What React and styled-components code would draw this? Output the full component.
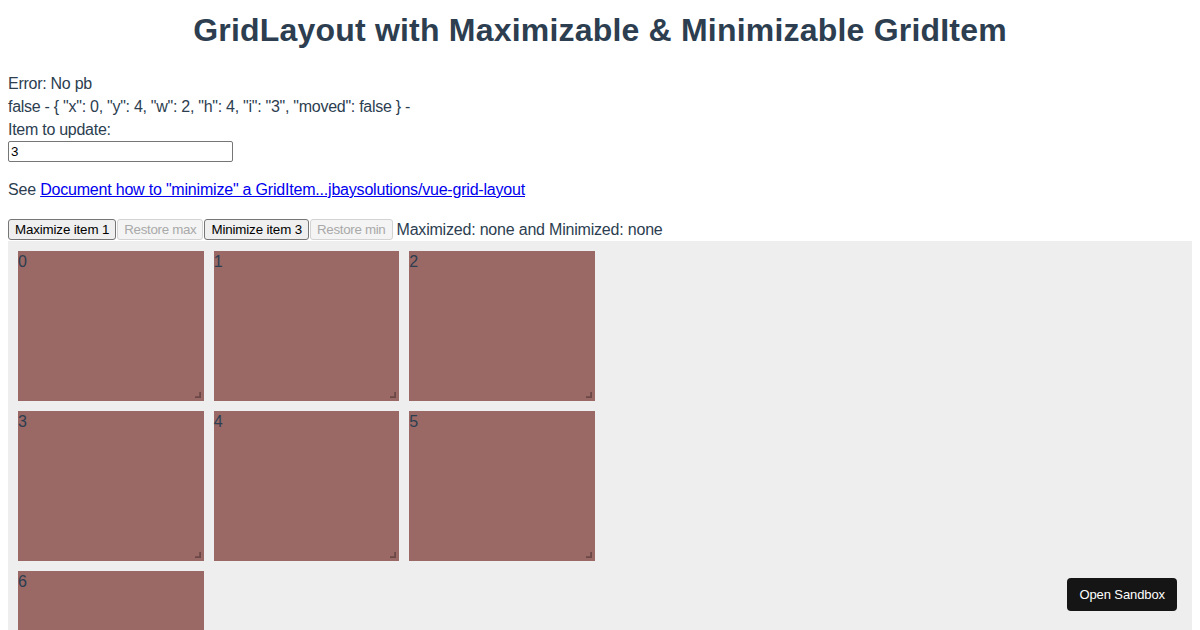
import React, { useState } from "react";
import styled, { createGlobalStyle } from "styled-components";

const GlobalStyle = createGlobalStyle`
  html, body {
    margin: 0;
    overflow: hidden;
  }
  body {
    font-family: "Liberation Sans", Arial, Helvetica, sans-serif;
    color: #2c3e50;
    background: #fff;
  }
`;

const layout = [
  { x: 0, y: 0, w: 2, h: 4, i: "0" },
  { x: 2, y: 0, w: 2, h: 4, i: "1" },
  { x: 4, y: 0, w: 2, h: 4, i: "2" },
  { x: 0, y: 4, w: 2, h: 4, i: "3" },
  { x: 2, y: 4, w: 2, h: 4, i: "4" },
  { x: 4, y: 4, w: 2, h: 4, i: "5" },
  { x: 0, y: 8, w: 2, h: 4, i: "6" },
];

const Page = styled.div`
  padding: 0 8px;
`;

const Title = styled.h1`
  margin: 12px 0 24px;
  font-size: 32px;
  line-height: 36px;
  letter-spacing: 0.2px;
  font-weight: bold;
  text-align: center;
`;

const Line = styled.div`
  font-size: 16px;
  line-height: 23px;
  letter-spacing: -0.27px;
`;

const ItemInput = styled.input`
  display: block;
  box-sizing: border-box;
  width: 225px;
  height: 21px;
  margin: 0;
  padding: 1px 2px;
  border: 1px solid #767676;
  border-radius: 2px;
  font-family: "Liberation Sans", Arial, sans-serif;
  font-size: 13.33px;
  color: #000;
`;

const SeeLine = styled.p`
  margin: 16px 0 0;
  font-size: 16px;
  line-height: 23px;
  letter-spacing: -0.2px;

  & > a {
    color: #0000ee;
    text-decoration: underline;
  }
`;

const Toolbar = styled.div`
  display: flex;
  align-items: flex-start;
  height: 22px;
  margin-top: 18px;
`;

const Button = styled.button`
  box-sizing: border-box;
  height: 21px;
  margin: 0;
  padding: 1px 6px;
  font-family: "Liberation Sans", Arial, sans-serif;
  font-size: 13.33px;
  line-height: 17px;
  letter-spacing: ${(p) => (p.disabled ? "-0.3px" : "-0.14px")};
  border-radius: 3px;
  border: 1px solid ${(p) => (p.disabled ? "#d3d3d3" : "#767676")};
  background: ${(p) => (p.disabled ? "#f4f4f4" : "#efefef")};
  color: ${(p) => (p.disabled ? "#a9a9a9" : "#000")};

  & + & {
    margin-left: 1px;
  }
`;

const Status = styled.span`
  margin-left: 4px;
  font-size: 16px;
  line-height: 21px;
  letter-spacing: -0.2px;
`;

const Grid = styled.div`
  display: grid;
  grid-template-columns: repeat(12, 1fr);
  grid-auto-rows: 30px;
  gap: 10px;
  padding: 10px;
  background: #eee;
  height: 490px;
  box-sizing: border-box;
`;

const Item = styled.div`
  position: relative;
  grid-column: ${(p) => p.$x + 1} / span ${(p) => p.$w};
  grid-row: ${(p) => p.$y + 1} / span ${(p) => p.$h};
  background: #9a6865;
  font-size: 16px;
  line-height: 21px;
  color: #2c3e50;
`;

const Handle = styled.svg`
  position: absolute;
  right: 3px;
  bottom: 3px;
  width: 6px;
  height: 6px;
`;

const SandboxButton = styled.a`
  position: fixed;
  right: 23px;
  bottom: 19px;
  box-sizing: border-box;
  height: 33px;
  padding: 0 12px;
  display: flex;
  align-items: center;
  background: #151515;
  color: #fff;
  border-radius: 4px;
  font-family: "Liberation Sans", Arial, sans-serif;
  font-size: 13px;
  letter-spacing: -0.1px;
  text-decoration: none;
`;

const GridItem = ({ item }) => (
  <Item $x={item.x} $y={item.y} $w={item.w} $h={item.h}>
    <span>{item.i}</span>
    <Handle viewBox="0 0 6 6">
      <path d="M6 6H0V4.2h4.2V0H6z" fill="#000" opacity="0.3" />
    </Handle>
  </Item>
);

export default function App() {
  const [value, setValue] = useState("3");

  return (
    <Page>
      <GlobalStyle />
      <Title>GridLayout with Maximizable &amp; Minimizable GridItem</Title>
      <Line>Error: No pb</Line>
      <Line>false - {'{ "x": 0, "y": 4, "w": 2, "h": 4, "i": "3", "moved": false }'} -</Line>
      <Line>Item to update:</Line>
      <ItemInput value={value} onChange={(e) => setValue(e.target.value)} />
      <SeeLine>
        See{" "}
        <a href="#">Document how to "minimize" a GridItem...jbaysolutions/vue-grid-layout</a>
      </SeeLine>
      <Toolbar>
        <Button>Maximize item 1</Button>
        <Button disabled>Restore max</Button>
        <Button>Minimize item 3</Button>
        <Button disabled>Restore min</Button>
        <Status>Maximized: none and Minimized: none</Status>
      </Toolbar>
      <Grid>
        {layout.map((item) => (
          <GridItem key={item.i} item={item} />
        ))}
      </Grid>
      <SandboxButton href="#">Open Sandbox</SandboxButton>
    </Page>
  );
}
